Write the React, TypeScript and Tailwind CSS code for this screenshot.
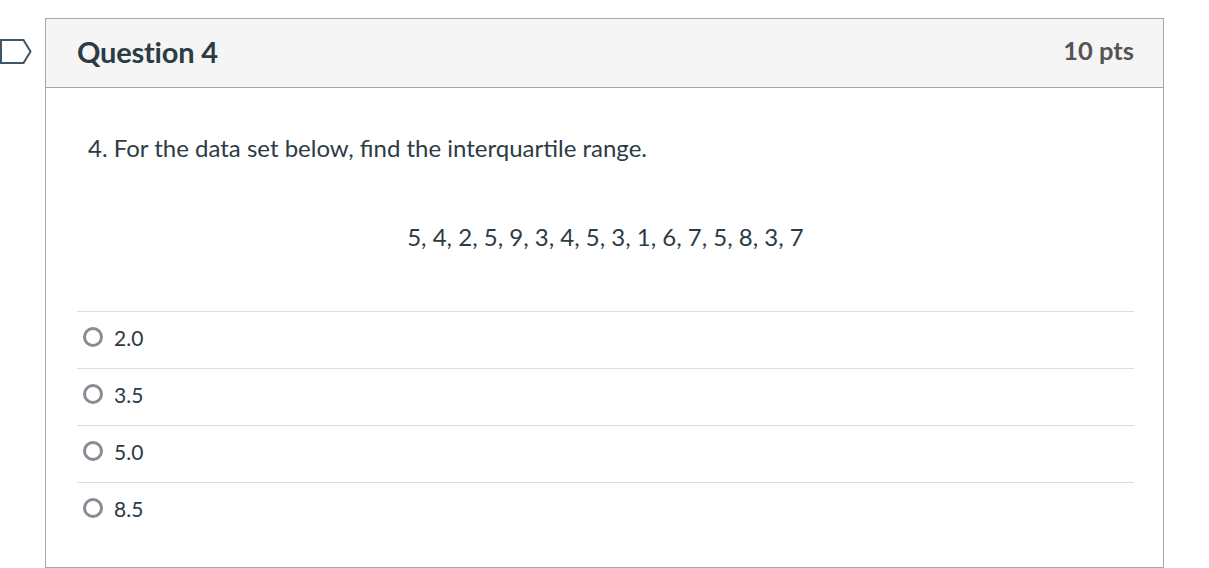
const OPTIONS = ["2.0", "3.5", "5.0", "8.5"]

function FlagIcon() {
  return (
    <svg width="32" height="25" viewBox="0 0 32 25" fill="none">
      <path d="M1 1 H23.5 L30.5 12.5 L23.5 24 H1 Z" stroke="#3e5668" strokeWidth="2" strokeLinejoin="miter" />
    </svg>
  )
}

export default function App() {
  return (
    <div className="min-h-[568px] bg-white pt-[18px] font-['Lato','Noto_Sans',sans-serif] text-[#2d3b45]">
      <div className="flex">
        {/* question flag */}
        <div className="w-[45px] shrink-0 pt-[21px]">
          <FlagIcon />
        </div>

        <div className="w-[1119px] border border-[#a8a8a8] border-b-0">
          {/* header */}
          <div className="flex h-[69px] items-center justify-between border-b border-[#a8a8a8] bg-[#f5f5f5] pb-[4px] pl-[31px] pr-[29px]">
            <h2 className="text-[29px] font-bold leading-none tracking-[-0.2px] text-[#2d3b45]">Question 4</h2>
            <span className="text-[25.5px] font-bold leading-none text-[#555555]">10 pts</span>
          </div>

          {/* body */}
          <div className="pl-[31px] pr-[29px] pt-[46px] pb-[28px]">
            <p className="pl-[11px] text-[24px] leading-[28px]">
              4. For the data set below, find the interquartile range.
            </p>
            <p className="mt-[61px] text-center text-[24px] leading-[28px]">
              5, 4, 2, 5, 9, 3, 4, 5, 3, 1, 6, 7, 5, 8, 3, 7
            </p>

            <div className="mt-[60px]">
              {OPTIONS.map((o) => (
                <label key={o} className="flex h-[57px] items-center gap-[11px] border-t border-[#dddddd] pb-[6px] pl-[6px]">
                  <span className="block h-[20px] w-[20px] rounded-full border-[3px] border-[#8b8a95]" />
                  <span className="text-[21px] leading-none">{o}</span>
                </label>
              ))}
            </div>
          </div>
        </div>
      </div>
      <div className="ml-[45px] w-[1119px] border-b border-[#a8a8a8]" />
    </div>
  )
}
